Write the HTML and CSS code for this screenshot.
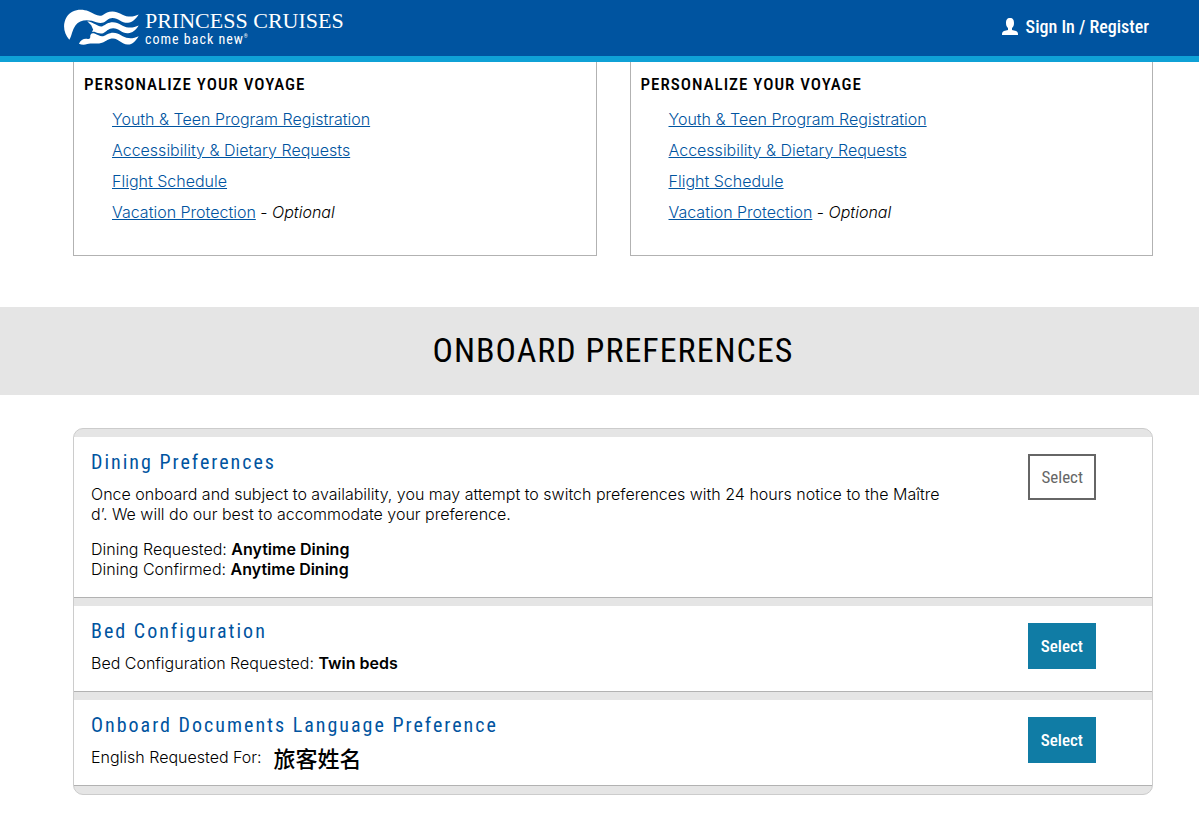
FILE: index.html
```html
<!DOCTYPE html>
<html lang="en">
  <head>
    <meta charset="UTF-8" />
    <meta name="viewport" content="width=device-width, initial-scale=1.0" />
    <title>Princess Cruises - Onboard Preferences</title>
    <link rel="stylesheet" href="styles.css">
  </head>
  <body>
    <header class="site-header">
      <a href="#" class="brand">
        <svg class="brand-mark" viewBox="42 26 226 110" aria-hidden="true">
          <path d="M58 118C42 100 36 73 50 49C64 27 93 23 116 32C133 39 145 50 158 44C168 38 175 33 188 33C207 33 219 47 236 48C248 49 258 46 267 42C258 56 248 66 235 67C216 68 206 52 188 52C176 52 170 61 161 66C151 69 138 66 126 61C107 56 87 60 77 74C66 89 66 105 58 118Z" />
          <path d="M112 62C135 66 145 81 158 77C168 72 175 65 189 65C208 65 219 80 236 81C248 82 258 79 267 75C258 89 248 98 235 98C216 99 208 83 190 83C176 83 170 93 160 98C152 101 143 98 134 94L126 94L130 88L124 74Z" />
          <path d="M87 130C92 118 101 114 111 115C120 117 122 113 121 106C123 98 127 97 134 99C145 103 151 109 160 107C171 104 177 97 190 97C209 97 219 112 236 113C248 114 258 111 267 107C258 121 248 132 235 132C216 133 207 114 190 114C175 114 169 122 159 126C145 132 127 127 112 131C103 134 94 133 87 130Z" />
        </svg>
        <span class="brand-text">
          <span class="brand-name">PRINCESS CRUISES</span>
          <span class="brand-tagline">come back new<sup>®</sup></span>
        </span>
      </a>
      <a href="#" class="sign-in">
        <svg class="user-icon" viewBox="0 0 16 18" aria-hidden="true">
          <path d="M8 0C11 0 12 2 12 5C12 8 11 9 10 10V12L14 13C16 14 16 15 16 17H0C0 15 0 14 2 13L6 12V10C5 9 4 8 4 5C4 2 5 0 8 0Z" />
        </svg>
        Sign In / Register
      </a>
    </header>

    <main>
      <div class="voyage-cards">
        <section class="voyage-card">
          <h3 class="voyage-title">PERSONALIZE YOUR VOYAGE</h3>
          <ul class="voyage-links">
            <li><a href="#">Youth &amp; Teen Program Registration</a></li>
            <li><a href="#">Accessibility &amp; Dietary Requests</a></li>
            <li><a href="#">Flight Schedule</a></li>
            <li><a href="#">Vacation Protection</a> - <em>Optional</em></li>
          </ul>
        </section>
        <section class="voyage-card">
          <h3 class="voyage-title">PERSONALIZE YOUR VOYAGE</h3>
          <ul class="voyage-links">
            <li><a href="#">Youth &amp; Teen Program Registration</a></li>
            <li><a href="#">Accessibility &amp; Dietary Requests</a></li>
            <li><a href="#">Flight Schedule</a></li>
            <li><a href="#">Vacation Protection</a> - <em>Optional</em></li>
          </ul>
        </section>
      </div>

      <div class="section-band">
        <h1 class="section-title">ONBOARD PREFERENCES</h1>
      </div>

      <div class="preferences">
        <section class="preference">
          <div class="preference-content">
            <h2 class="preference-title">Dining Preferences</h2>
            <p>
              Once onboard and subject to availability, you may attempt to switch
              preferences with 24 hours notice to the Maître d’. We will do our
              best to accommodate your preference.
            </p>
            <p>
              Dining Requested: <strong>Anytime Dining</strong><br />
              Dining Confirmed: <strong>Anytime Dining</strong>
            </p>
          </div>
          <button type="button" class="select-button outline">Select</button>
        </section>
        <section class="preference">
          <div class="preference-content">
            <h2 class="preference-title">Bed Configuration</h2>
            <p>Bed Configuration Requested: <strong>Twin beds</strong></p>
          </div>
          <button type="button" class="select-button">Select</button>
        </section>
        <section class="preference">
          <div class="preference-content">
            <h2 class="preference-title">Onboard Documents Language Preference</h2>
            <p class="guest">English Requested For: <span class="guest-name" lang="zh">旅客姓名</span></p>
          </div>
          <button type="button" class="select-button">Select</button>
        </section>
      </div>
    </main>
  </body>
</html>
```
FILE: styles.css
```css
* {
  box-sizing: border-box;
}

body {
  margin: 0;
  background: #fff;
  color: #000;
  font-family: Inter, sans-serif;
  font-size: 16px;
  font-weight: 300;
  line-height: 20px;
}

h1,
h2,
h3,
p,
ul {
  margin: 0;
  padding: 0;
}

h1,
h2,
h3,
.sign-in,
.brand-tagline,
.select-button {
  font-family: "Roboto Condensed", "Liberation Sans Narrow", Roboto, sans-serif;
}

strong {
  font-weight: 600;
}

.site-header {
  display: flex;
  justify-content: space-between;
  align-items: center;
  height: 62px;
  padding: 0 50px 2px 64px;
  background: #0054a0;
  border-bottom: 6px solid #0fa1d6;
}

.brand,
.sign-in {
  display: flex;
  align-items: center;
  color: #fff;
  text-decoration: none;
}

.brand {
  gap: 6px;
}

.brand-mark {
  width: 75px;
  height: 37px;
  fill: #fff;
}

.brand-text {
  display: flex;
  flex-direction: column;
  padding-top: 2px;
}

.brand-name {
  font-family: "Liberation Serif", serif;
  font-size: 22px;
  font-weight: 400;
  line-height: 22px;
}

.brand-tagline {
  font-size: 14px;
  line-height: 14px;
  font-weight: 400;
  letter-spacing: 1px;
}

.brand-tagline sup {
  font-size: 5px;
  line-height: 0;
}

.sign-in {
  gap: 8px;
  font-size: 18px;
  font-weight: 500;
}

.user-icon {
  width: 16px;
  height: 18px;
  fill: #fff;
}

.voyage-cards {
  display: grid;
  grid-template-columns: 1fr 1fr;
  gap: 33px;
  padding: 0 46px 0 73px;
}

.voyage-card {
  padding: 11px 10px 27px;
  border: 1px solid #b2b2b2;
  border-top: 0;
}

.voyage-title {
  font-size: 17px;
  line-height: 22px;
  font-weight: 500;
  letter-spacing: 1px;
}

.voyage-links {
  margin-top: 9px;
  padding-left: 28px;
  list-style: none;
  line-height: 31px;
}

.voyage-links a {
  color: #0054a0;
}

.section-band {
  margin-top: 51px;
  padding: 21px 46px 23px 73px;
  background: #e5e5e5;
}

.section-title {
  font-size: 34px;
  line-height: 44px;
  font-weight: 400;
  letter-spacing: 1px;
  text-align: center;
}

.preferences {
  margin: 33px 46px 21px 73px;
  padding-top: 8px;
  background: #e5e5e5;
  border: 1px solid #ccc;
  border-radius: 10px;
}

.preference {
  display: flex;
  justify-content: space-between;
  align-items: flex-start;
  margin-bottom: 8px;
  padding: 17px 56px 18px 17px;
  background: #fff;
  border-bottom: 1px solid #b2b2b2;
}

.preference-content {
  width: 85%;
}

.preference-title {
  margin-bottom: 14px;
  color: #0054a0;
  font-size: 20px;
  line-height: 16px;
  font-weight: 400;
  letter-spacing: 2px;
}

.preference p + p {
  margin-top: 15px;
}

.guest {
  display: flex;
  align-items: center;
  gap: 12px;
}

.guest-name {
  font-family: "Noto Sans CJK SC", sans-serif;
  font-size: 22px;
  font-weight: 500;
  line-height: 18px;
}

.select-button {
  height: 46px;
  padding: 0 13px;
  background: #107ca5;
  color: #fff;
  border: 0;
  font-size: 17px;
  font-weight: 500;
}

.select-button.outline {
  padding: 0 11px;
  background: #fff;
  color: #666;
  border: 2px solid #666;
  font-weight: 400;
}
```
